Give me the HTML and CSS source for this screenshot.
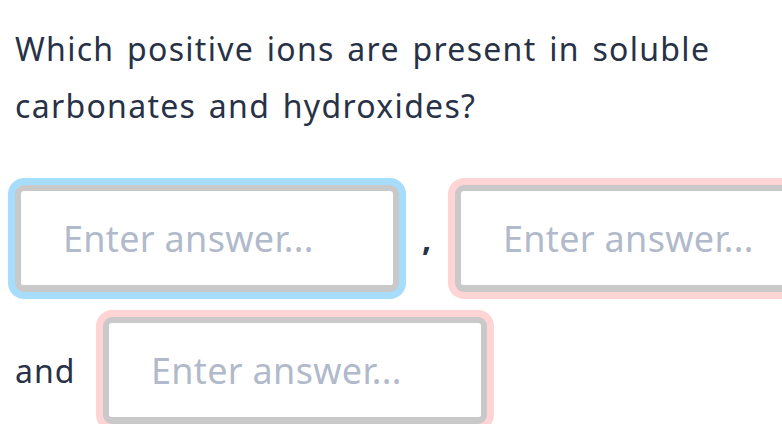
FILE: index.html
```html
<!DOCTYPE html>
<html lang="en">
<head>
    <meta charset="UTF-8">
    <meta name="viewport" content="width=device-width, initial-scale=1.0">
    <title>Question</title>
    <link rel="stylesheet" href="styles.css">
</head>
<body>
    <div class="container">
        <p class="question">Which positive ions are present in soluble<br>carbonates and hydroxides?</p>

        <div class="answers">
            <div class="row">
                <input type="text" class="answer-input focused" placeholder="Enter answer...">
                <span class="sep">,</span>
                <input type="text" class="answer-input wrong" placeholder="Enter answer...">
            </div>
            <div class="row">
                <span class="word">and</span>
                <input type="text" class="answer-input wrong" placeholder="Enter answer...">
            </div>
        </div>
    </div>
</body>
</html>
```

FILE: styles.css
```css
body {
    margin: 0;
    font-family: "Noto Sans", Arial, sans-serif;
    color: #283247;
    background: #fff;
    overflow: hidden;
}
.container {
    padding: 20px 0 0 15px;
}
.question {
    margin: 0;
    font-size: 32px;
    line-height: 57px;
    letter-spacing: 1.3px;
    word-spacing: 3px;
    white-space: nowrap;
}
.answers {
    margin-top: 51px;
    display: flex;
    flex-direction: column;
    gap: 25px;
}
.row {
    display: flex;
    align-items: center;
    flex-wrap: nowrap;
    overflow: hidden;
    padding: 7px;
    margin: -7px -7px -7px -7px;
    font-size: 32px;
    letter-spacing: 1px;
}
.answer-input {
    flex: none;
    box-sizing: border-box;
    width: 384px;
    height: 107px;
    padding: 0 0 0 42px;
    border: 6px solid #c9c9c9;
    border-bottom-width: 7px;
    border-radius: 9px;
    font-family: inherit;
    font-size: 36px;
    letter-spacing: 0.3px;
    color: #283247;
    background: #fff;
    outline: none;
}
.answer-input::placeholder {
    color: #b1bacb;
}
.answer-input.focused {
    box-shadow: 0 0 0 7px #a6ddfc;
}
.answer-input.wrong {
    box-shadow: 0 0 0 7px #ffd4d4;
}
.sep {
    flex: none;
    width: 56px;
    text-align: center;
    font-weight: 700;
}
.word {
    flex: none;
    width: 88px;
}
```
